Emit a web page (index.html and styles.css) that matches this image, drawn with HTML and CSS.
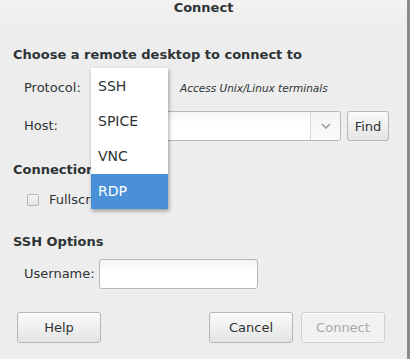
FILE: index.html
```html
<!DOCTYPE html>
<html lang="en">
<head>
    <meta charset="UTF-8">
    <title>Connect</title>
    <link rel="stylesheet" href="styles.css">
</head>
<body>
    <div class="window">
        <header class="titlebar">Connect</header>

        <div class="content">
            <h2 class="section-title first">Choose a remote desktop to connect to</h2>
            <div class="form-grid">
                <label class="field-label">Protocol:</label>
                <div class="protocol-row">
                    <div class="combo-hidden"></div>
                    <span class="hint">Access Unix/Linux terminals</span>
                </div>

                <label class="field-label">Host:</label>
                <div class="host-row">
                    <div class="combo-entry">
                        <input type="text" class="entry-input">
                        <span class="combo-arrow">
                            <svg width="10" height="6" viewBox="0 0 10 6"><path d="M1 1 L5 5 L9 1" fill="none" stroke="#9a9a9a" stroke-width="1.5"/></svg>
                        </span>
                    </div>
                    <button class="btn find-btn">Find</button>
                </div>
            </div>

            <h2 class="section-title connection">Connection</h2>
            <label class="check-row">
                <span class="checkbox"></span>
                <span>Fullscreen</span>
            </label>

            <h2 class="section-title ssh">SSH Options</h2>
            <div class="user-row">
                <label class="field-label">Username:</label>
                <input type="text" class="entry-input user-entry">
            </div>

            <div class="button-row">
                <button class="btn">Help</button>
                <div class="right-buttons">
                    <button class="btn">Cancel</button>
                    <button class="btn" disabled>Connect</button>
                </div>
            </div>
        </div>

        <!-- protocol popup menu -->
        <ul class="popup">
            <li>SSH</li>
            <li>SPICE</li>
            <li>VNC</li>
            <li class="selected">RDP</li>
        </ul>
    </div>
</body>
</html>
```

FILE: styles.css
```css
body {
    margin: 0;
    font-family: "DejaVu Sans", sans-serif;
    font-size: 13px;
    color: #2e3436;
    background: #ededed;
}

.window {
    position: relative;
    width: 407px;
    height: 359px;
    border-right: 3px solid #8b8b8b;
    background: #ededed;
    overflow: hidden;
}

/* title bar ======================================================= */

.titlebar {
    height: 30px;
    line-height: 16px;
    text-align: center;
    font-weight: bold;
    font-size: 13px;
    background: linear-gradient(#f3f3f3, #ececec);
}

/* main content ==================================================== */

.content {
    padding: 0 0 0 13px;
}

.section-title {
    margin: 0;
    font-size: 13px;
    font-weight: bold;
    line-height: 16px;
    padding-top: 16px;
}

.section-title.first {
    padding-top: 17px;
}

.section-title.connection {
    padding-top: 21px;
}

.section-title.ssh {
    padding-top: 26px;
}

.form-grid {
    display: grid;
    grid-template-columns: 67px auto;
    row-gap: 8px;
    margin-top: 10px;
    padding-left: 11px;
    align-items: center;
}

.field-label {
    line-height: 16px;
}

.protocol-row {
    display: flex;
    align-items: center;
    height: 30px;
}

.combo-hidden {
    width: 78px;
    height: 30px;
}

.hint {
    margin-left: 11px;
    font-size: 10.5px;
    font-style: italic;
}

.host-row {
    display: flex;
    align-items: center;
    gap: 6px;
}

.combo-entry {
    display: flex;
    width: 250px;
    height: 30px;
    box-sizing: border-box;
    border: 1px solid #b6b6b3;
    border-radius: 3px;
    background: #fff;
    overflow: hidden;
}

.entry-input {
    flex: 1;
    border: none;
    outline: none;
    background: linear-gradient(#f4f4f4, #ffffff 40%);
    font-family: inherit;
}

.combo-arrow {
    width: 29px;
    display: flex;
    align-items: center;
    justify-content: center;
    border-left: 1px solid #d8d8d8;
    background: linear-gradient(#f4f4f4, #fbfbfb);
}

.btn {
    font-family: inherit;
    font-size: 13px;
    color: #2e3436;
    height: 31px;
    box-sizing: border-box;
    border: 1px solid #b6b6b3;
    border-radius: 3px;
    background: linear-gradient(#fafafa, #e4e4e4);
    box-shadow: inset 0 1px #ffffff;
    padding: 0;
}

.btn:disabled {
    color: #a8a8a8;
    border-color: #cfcfcf;
    background: #f2f2f2;
}

.find-btn {
    width: 42px;
    height: 30px;
}

.check-row {
    display: flex;
    align-items: center;
    gap: 10px;
    margin-top: 14px;
    padding-left: 14px;
    line-height: 16px;
}

.checkbox {
    width: 10px;
    height: 10px;
    border: 1px solid #b5b5b5;
    border-radius: 2px;
    background: linear-gradient(#f5f5f5, #e6e6e6);
}

.user-row {
    display: flex;
    align-items: center;
    gap: 4px;
    margin-top: 9px;
    padding-left: 11px;
}

.user-entry {
    flex: none;
    width: 159px;
    height: 30px;
    box-sizing: border-box;
    border: 1px solid #b6b6b3;
    border-radius: 3px;
}

.button-row {
    display: flex;
    justify-content: space-between;
    margin-top: 23px;
    padding: 0 22px 0 4px;
}

.button-row .btn {
    width: 84px;
}

.right-buttons {
    display: flex;
    gap: 8px;
}

/* popup menu ====================================================== */

.popup {
    position: absolute;
    left: 91px;
    top: 68px;
    width: 77px;
    margin: 0;
    padding: 0;
    list-style: none;
    background: #fff;
    box-shadow: 1px 2px 4px rgba(0, 0, 0, 0.35);
}

.popup li {
    height: 35px;
    line-height: 35px;
    padding-left: 7px;
    font-size: 14px;
}

.popup li:first-child {
    height: 36px;
    line-height: 36px;
}

.popup .selected {
    background: #4a90d9;
    color: #fff;
}
```
